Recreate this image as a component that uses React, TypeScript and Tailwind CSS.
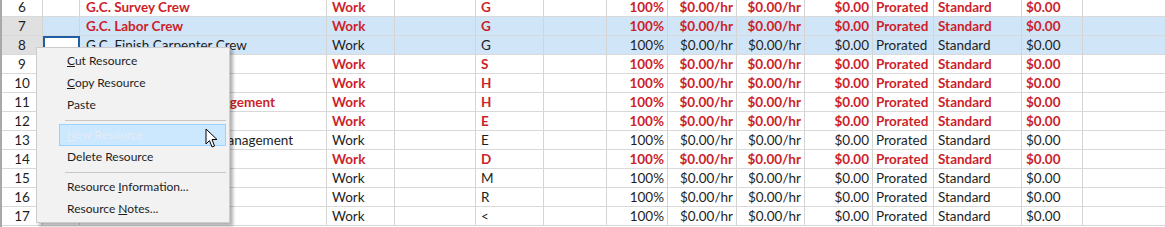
import React from "react";

type Row = {
  n: number;
  name: string;
  init: string;
  red: boolean;
};

const rows: Row[] = [
  { n: 6, name: "G.C. Survey Crew", init: "G", red: true },
  { n: 7, name: "G.C. Labor Crew", init: "G", red: true },
  { n: 8, name: "G.C. Finish Carpenter Crew", init: "G", red: false },
  { n: 9, name: "Site Crew", init: "S", red: true },
  { n: 10, name: "Hauling Crew", init: "H", red: true },
  { n: 11, name: "Health and Safety Management", init: "H", red: true },
  { n: 12, name: "Electrical Crew", init: "E", red: true },
  { n: 13, name: "Environmental Safety Management", init: "E", red: false },
  { n: 14, name: "Demolition Crew", init: "D", red: true },
  { n: 15, name: "Mechanical", init: "M", red: false },
  { n: 16, name: "Roofing", init: "R", red: false },
  { n: 17, name: "Landscaping", init: "<", red: false },
];

const cell = "h-full flex items-center border-r border-[#d4d4d4] whitespace-nowrap overflow-hidden shrink-0";

function GridRow({ r }: { r: Row }) {
  const selected = r.n === 7 || r.n === 8;
  const txt = r.red ? "text-[#cc1f2a] font-bold" : "text-[#1e1e1e]";
  return (
    <div className={`flex h-[19px] border-b border-[#d9d9d9] ${selected ? "bg-[#d1e5f8]" : "bg-white"}`}>
      <div className={`${cell} w-[41px] justify-center text-[#1e1e1e] ${selected ? "bg-[#e0e0e0]" : "bg-white"}`}>
        {r.n}
      </div>
      <div className={`${cell} w-[37px] ${r.n === 8 ? "bg-white outline-2 outline-[#1f5fa8] -outline-offset-2" : ""}`} />
      <div className={`${cell} w-[247px] pl-[6px] ${txt}`}>{r.name}</div>
      <div className={`${cell} w-[68px] pl-[5px] ${txt}`}>Work</div>
      <div className={`${cell} w-[81px]`} />
      <div className={`${cell} w-[68px] pl-[5px] ${txt}`}>{r.init}</div>
      <div className={`${cell} w-[63px]`} />
      <div className={`${cell} w-[61px] justify-end pr-[3px] ${txt}`}>100%</div>
      <div className={`${cell} w-[69px] justify-end pr-[3px] ${txt}`}>$0.00/hr</div>
      <div className={`${cell} w-[68px] justify-end pr-[3px] ${txt}`}>$0.00/hr</div>
      <div className={`${cell} w-[68px] justify-end pr-[3px] ${txt}`}>$0.00</div>
      <div className={`${cell} w-[61px] pl-[3px] ${txt}`}>Prorated</div>
      <div className={`${cell} w-[88px] pl-[4px] ${txt}`}>Standard</div>
      <div className={`${cell} w-[61px] pl-[4px] ${txt}`}>$0.00</div>
      <div className="flex-1" />
    </div>
  );
}

function MenuItem({ children, hot }: { children: React.ReactNode; hot?: boolean }) {
  return (
    <div
      className={`ml-[22px] mr-[3px] h-[22px] flex items-center pl-[7px] border ${
        hot ? "bg-[#cce8ff] border-[#99d1ff] text-[#e4ecf5]" : "border-transparent text-[#1e1e1e]"
      }`}
    >
      {children}
    </div>
  );
}

function Sep() {
  return (
    <div className="h-[8px] flex items-center ml-[28px] mr-[3px]">
      <div className="h-px w-full bg-[#c8c8c8]" />
    </div>
  );
}

export default function App() {
  return (
    <div className="relative w-[1165px] h-[227px] overflow-hidden bg-white border-l-2 border-[#a8a8a8] text-[13.5px] font-['Lato','Noto_Sans',sans-serif]">
      <div className="-mt-[2px]">
        {rows.map((r) => (
          <GridRow key={r.n} r={r} />
        ))}
      </div>

      {/* context menu */}
      <div className="absolute left-[34px] top-[47px] w-[194px] bg-[#f2f2f2] border border-[#cccccc] py-[2px] text-[12px] shadow-[3px_3px_3px_rgba(0,0,0,0.3)] font-['Lato','Noto_Sans',sans-serif]">
        <MenuItem>
          <span><u>C</u>ut Resource</span>
        </MenuItem>
        <MenuItem>
          <span><u>C</u>opy Resource</span>
        </MenuItem>
        <MenuItem>Paste</MenuItem>
        <Sep />
        <MenuItem hot>
          <span><u>N</u>ew Resource</span>
        </MenuItem>
        <MenuItem>Delete Resource</MenuItem>
        <Sep />
        <MenuItem>
          <span>Resource <u>I</u>nformation...</span>
        </MenuItem>
        <MenuItem>
          <span>Resource <u>N</u>otes...</span>
        </MenuItem>
      </div>

      {/* mouse pointer */}
      <svg className="absolute left-[203px] top-[128px]" width="14" height="21" viewBox="0 0 14 21">
        <path d="M1 1 L1 16 L4.5 12.5 L7 19 L9.5 18 L7 11.5 L12 11.5 Z" fill="#ffffff" stroke="#000000" strokeWidth="1" strokeLinejoin="round" />
      </svg>
    </div>
  );
}
